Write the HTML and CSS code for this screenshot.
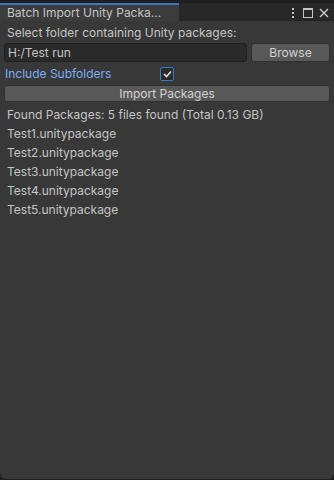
FILE: index.html
```html
<!DOCTYPE html>
<html lang="en">
<head>
    <meta charset="UTF-8">
    <title>Batch Import Unity Packages</title>
    <link rel="stylesheet" href="styles.css">
</head>
<body>
    <div class="window">
        <div class="tabbar">
            <div class="tab">Batch Import Unity Packa...</div>
            <div class="tab-tools">
                <svg class="tool" width="10" height="12" viewBox="0 0 10 12">
                    <rect x="4" y="1" width="2" height="2" fill="#c4c4c4"/>
                    <rect x="4" y="5" width="2" height="2" fill="#c4c4c4"/>
                    <rect x="4" y="9" width="2" height="2" fill="#c4c4c4"/>
                </svg>
                <svg class="tool" width="12" height="12" viewBox="0 0 12 12">
                    <rect x="1.5" y="1.5" width="9" height="9" fill="none" stroke="#c4c4c4" stroke-width="1"/>
                    <rect x="1" y="1" width="10" height="2" fill="#c4c4c4"/>
                </svg>
                <svg class="tool" width="12" height="12" viewBox="0 0 12 12">
                    <path d="M2 2 L10 10 M10 2 L2 10" stroke="#c4c4c4" stroke-width="1.5"/>
                </svg>
            </div>
        </div>

        <div class="content">
            <div class="label">Select folder containing Unity packages:</div>
            <div class="row">
                <div class="field">H:/Test run</div>
                <button class="btn browse">Browse</button>
            </div>
            <div class="row toggle">
                <span class="label blue">Include Subfolders</span>
                <span class="checkbox">
                    <svg width="9" height="8" viewBox="0 0 9 8">
                        <path d="M1 4 L3.5 6.5 L8 1.5" fill="none" stroke="#e0e0e0" stroke-width="1.6"/>
                    </svg>
                </span>
            </div>
            <button class="btn import">Import Packages</button>

            <div class="found">Found Packages: 5 files found (Total 0.13 GB)</div>
            <ul class="list">
                <li>Test1.unitypackage</li>
                <li>Test2.unitypackage</li>
                <li>Test3.unitypackage</li>
                <li>Test4.unitypackage</li>
                <li>Test5.unitypackage</li>
            </ul>
        </div>
    </div>
</body>
</html>
```

FILE: styles.css
```css
* {
    margin: 0;
    padding: 0;
    box-sizing: border-box;
}

body {
    font-family: Inter, "Noto Sans", sans-serif;
    font-size: 12px;
    color: #c4c4c4;
    background: #1e1e1e;
    width: 334px;
    height: 480px;
    overflow: hidden;
    padding-top: 3px;
}

.window {
    height: 476px;
    display: flex;
    flex-direction: column;
    background: #383838;
    border-radius: 0 0 6px 6px;
    overflow: hidden;
}

.tabbar {
    height: 18px;
    display: flex;
    background: #282828;
}

.tab {
    width: 179px;
    background: #3c3c3c;
    border-top: 2px solid #3a79bb;
    padding-left: 7px;
    line-height: 15px;
    color: #c4c4c4;
    white-space: nowrap;
}

.tab-tools {
    flex: 1;
    display: flex;
    justify-content: flex-end;
    align-items: center;
    gap: 4px;
    padding-right: 4px;
    padding-top: 2px;
    border-bottom: 1px solid #232323;
}

.tool {
    display: block;
}

.content {
    flex: 1;
    padding: 3px 4px 0 4px;
}

.label {
    padding-left: 3px;
    line-height: 18px;
    height: 19px;
}

.blue {
    color: #7aaef5;
    padding-left: 1px;
}

.row {
    display: flex;
    gap: 4px;
    height: 19px;
}

.field {
    flex: 1;
    background: #2a2a2a;
    border: 1px solid #212121;
    border-radius: 3px;
    padding-left: 3px;
    line-height: 17px;
}

.btn {
    font-family: inherit;
    font-size: 12px;
    color: #d2d2d2;
    background: #585858;
    border: 1px solid #303030;
    border-radius: 3px;
    line-height: 15px;
}

.browse {
    width: 79px;
}

.toggle {
    margin-top: 2px;
    height: 20px;
    align-items: center;
}

.toggle .label {
    width: 152px;
    height: auto;
}

.checkbox {
    width: 14px;
    height: 14px;
    border: 1px solid #3a79bb;
    border-radius: 2px;
    background: #2a2a2a;
    display: flex;
    align-items: center;
    justify-content: center;
}

.import {
    display: block;
    width: 100%;
    height: 17px;
    margin-top: 1px;
}

.found {
    margin-top: 3px;
    padding-left: 3px;
    line-height: 19px;
}

.list {
    list-style: none;
    padding-left: 3px;
}

.list li {
    line-height: 19px;
}
```
